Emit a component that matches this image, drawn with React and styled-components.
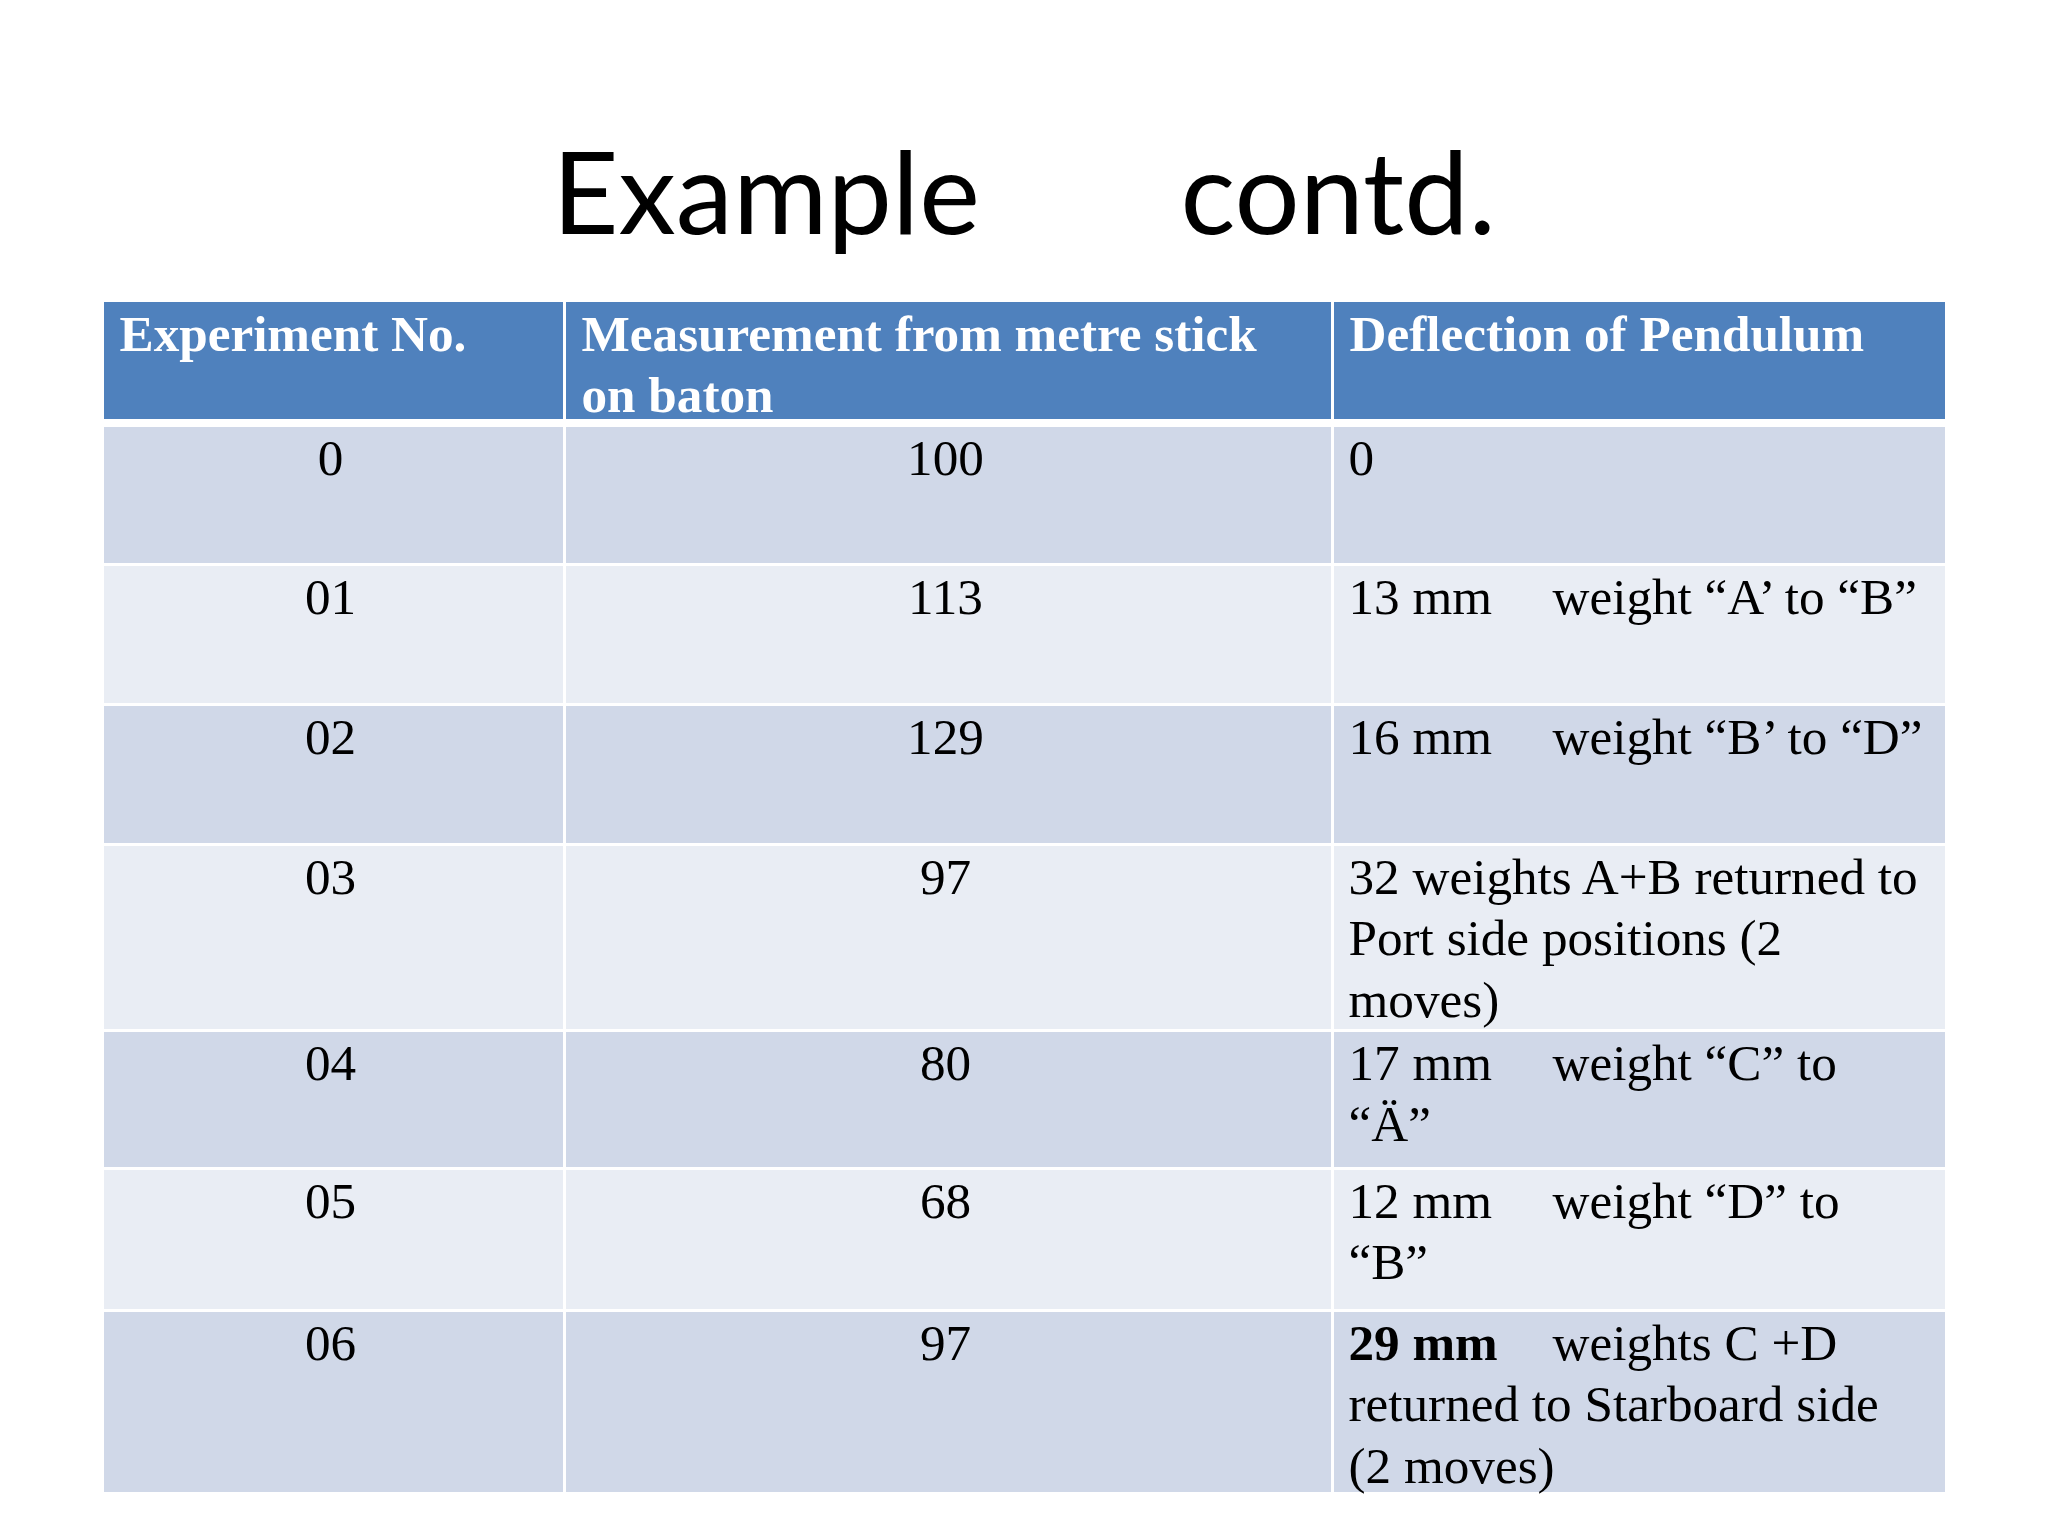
import React from "react";
import styled, { createGlobalStyle } from "styled-components";

const GlobalStyle = createGlobalStyle`
  html, body {
    margin: 0;
    padding: 0;
    background: #ffffff;
  }
`;

const Slide = styled.div`
  width: 2048px;
  height: 1536px;
  display: flex;
  flex-direction: column;
  align-items: center;
  background: #ffffff;
  overflow: hidden;
`;

const Title = styled.h1`
  margin: 0;
  height: 302px;
  box-sizing: border-box;
  padding-top: 119px;
  font-family: Lato, "Open Sans", sans-serif;
  font-weight: normal;
  font-size: 115px;
  line-height: 140px;
  word-spacing: 4px;
  color: #000000;
  white-space: pre;
  text-align: center;
`;

const Table = styled.div`
  width: 1841px;
  display: flex;
  flex-direction: column;
  gap: 3px;
`;

const Row = styled.div`
  display: grid;
  grid-template-columns: 459px 765px 611px;
  grid-template-rows: ${({ $h }) => $h}px;
  column-gap: 3px;
  height: ${({ $h }) => $h}px;
  margin-bottom: ${({ $header }) => ($header ? "5px" : "0")};
`;

const Cell = styled.div`
  box-sizing: border-box;
  min-height: 0;
  padding: 0 20px 0 15px;
  background: ${({ $band }) => ($band ? "#d0d8e8" : "#e9edf4")};
  text-align: ${({ $align }) => $align || "left"};
  font-family: "Liberation Serif", "Times New Roman", serif;
  font-size: 51.2px;
  line-height: 61.44px;
  color: #000000;
`;

const HeadCell = styled(Cell)`
  padding-top: 1px;
  padding-left: 16px;
  background: #4f81bd;
  color: #ffffff;
  font-weight: bold;
`;

// tab stop at one inch, as in the slide
const Tab = styled.span`
  display: inline-block;
  width: 204px;
`;

const rows = [
  { no: "0", m: "100", d: "0", h: 136 },
  {
    no: "01",
    m: "113",
    d: (
      <>
        <Tab>13 mm</Tab>weight “A’ to “B”
      </>
    ),
    h: 137,
  },
  {
    no: "02",
    m: "129",
    d: (
      <>
        <Tab>16 mm</Tab>weight “B’ to “D”
      </>
    ),
    h: 137,
  },
  {
    no: "03",
    m: "97",
    d: "32 weights A+B returned to Port side positions (2 moves)",
    h: 183,
  },
  {
    no: "04",
    m: "80",
    d: (
      <>
        <Tab>17 mm</Tab>
        <span>weight “C” to</span>
        <br />
        <span>“Ä”</span>
      </>
    ),
    h: 135,
  },
  {
    no: "05",
    m: "68",
    d: (
      <>
        <Tab>12 mm</Tab>
        <span>weight “D” to</span>
        <br />
        <span>“B”</span>
      </>
    ),
    h: 139,
  },
  {
    no: "06",
    m: "97",
    d: (
      <>
        <Tab>
          <b>29 mm</b>
        </Tab>
        <span>weights C +D</span>
        <br />
        <span>returned to Starboard side</span>
        <br />
        <span>(2 moves)</span>
      </>
    ),
    h: 180,
  },
];

const App = () => {
  return (
    <>
      <GlobalStyle />
      <Slide>
        <Title>{"Example      contd."}</Title>
        <Table>
          <Row $h={117} $header>
            <HeadCell>Experiment No.</HeadCell>
            <HeadCell>Measurement from metre stick on baton</HeadCell>
            <HeadCell>Deflection of Pendulum</HeadCell>
          </Row>
          {rows.map((row, index) => (
            <Row key={index} $h={row.h}>
              <Cell $band={index % 2 === 0} $align="center">
                {row.no}
              </Cell>
              <Cell $band={index % 2 === 0} $align="center">
                {row.m}
              </Cell>
              <Cell $band={index % 2 === 0}>{row.d}</Cell>
            </Row>
          ))}
        </Table>
      </Slide>
    </>
  );
};

export default App;
